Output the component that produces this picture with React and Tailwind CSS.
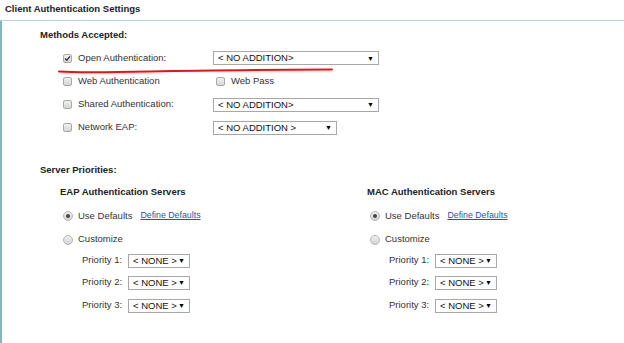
import React from "react";

const font = { fontFamily: '"Liberation Sans", Arial, sans-serif' };

function Checkbox({ checked }) {
  return (
    <span className="relative inline-flex h-[9px] w-[9px] shrink-0 items-center justify-center rounded-[2px] border border-[#a9a9a9] bg-gradient-to-b from-[#f0f0f0] to-[#d6d6d6]">
      {checked && (
        <svg width="7" height="7" viewBox="0 0 7 7" className="block">
          <path d="M1 3.6 L2.8 5.3 L6 1.4" fill="none" stroke="#3a3a3a" strokeWidth="1.4" />
        </svg>
      )}
    </span>
  );
}

function Radio({ checked }) {
  return (
    <span className="inline-flex h-[10px] w-[10px] shrink-0 items-center justify-center rounded-full border border-[#b4b4b4] bg-gradient-to-b from-[#f0f0f0] to-[#d4d4d4]">
      {checked && <span className="h-[4px] w-[4px] rounded-full bg-[#444]" />}
    </span>
  );
}

function Select({ text, w }) {
  return (
    <span
      className={`inline-flex h-[14px] items-center justify-between border border-[#a8a8a8] bg-white pl-[4px] pr-[4px] text-[9.5px] text-[#111] ${w}`}
    >
      <span className="leading-none">{text}</span>
      <span className="text-[7px] leading-none text-black">▼</span>
    </span>
  );
}

function ServerColumn({ title }) {
  return (
    <div className="flex flex-col">
      <div className="flex h-[22px] items-center font-bold text-[#222]">{title}</div>
      <div className="flex h-[26px] items-center pl-[3px]">
        <Radio checked />
        <span className="ml-[5px] text-[#333]">Use Defaults</span>
        <a className="ml-[8px] text-[8.8px] text-[#2156b8] underline">Define Defaults</a>
      </div>
      <div className="flex h-[21px] items-center pl-[3px]">
        <Radio />
        <span className="ml-[5px] text-[#333]">Customize</span>
      </div>
      {[1, 2, 3].map((n, i) => (
        <div key={n} className={`flex items-center pl-[22px] ${i === 0 ? "h-[21px]" : "h-[23px]"}`}>
          <span className="w-[46px] text-[#333]">Priority {n}:</span>
          <Select text="< NONE >" w="w-[62px]" />
        </div>
      ))}
    </div>
  );
}

export default function App() {
  return (
    <div
      className="relative flex h-[343px] w-[624px] flex-col overflow-hidden bg-white text-[9.5px] text-[#333]"
      style={font}
    >
      <div className="flex h-[21px] shrink-0 items-center border-b-[1.5px] border-[#b7d4d8] pb-[2px] pl-[5px] text-[9.5px] font-bold text-[#222]">
        Client Authentication Settings
      </div>
      <div className="flex flex-1 flex-col border-l-2 border-[#86b5ba] pl-[38px]">
        <div className="mt-[3px] flex h-[22px] items-center font-bold text-[#222]">Methods Accepted:</div>

        <div className="flex h-[24px] items-center pl-[23px]">
          <div className="flex w-[150px] items-center">
            <Checkbox checked />
            <span className="ml-[6px]">Open Authentication:</span>
          </div>
          <Select text="< NO ADDITION>" w="w-[166px]" />
        </div>

        <div className="flex h-[23px] items-center pl-[23px]">
          <div className="flex w-[153px] items-center">
            <Checkbox />
            <span className="ml-[6px]">Web Authentication</span>
          </div>
          <Checkbox />
          <span className="ml-[6px]">Web Pass</span>
        </div>

        <div className="flex h-[23px] items-center pl-[23px]">
          <div className="flex w-[150px] items-center">
            <Checkbox />
            <span className="ml-[6px]">Shared Authentication:</span>
          </div>
          <Select text="< NO ADDITION>" w="w-[166px]" />
        </div>

        <div className="flex h-[23px] items-center pl-[23px]">
          <div className="flex w-[150px] items-center">
            <Checkbox />
            <span className="ml-[6px]">Network EAP:</span>
          </div>
          <Select text="< NO ADDITION >" w="w-[124px]" />
        </div>

        <div className="mt-[21px] flex h-[21px] items-center font-bold text-[#222]">Server Priorities:</div>

        <div className="flex pl-[20px]">
          <div className="w-[307px]">
            <ServerColumn title="EAP Authentication Servers" />
          </div>
          <ServerColumn title="MAC Authentication Servers" />
        </div>
      </div>

      <svg className="pointer-events-none absolute left-0 top-0" width="624" height="343">
        <path d="M59 71.5 Q 80 73, 150 71.5 T 332 69.5" fill="none" stroke="#ee1111" strokeWidth="2" strokeLinecap="round" />
      </svg>
    </div>
  );
}
